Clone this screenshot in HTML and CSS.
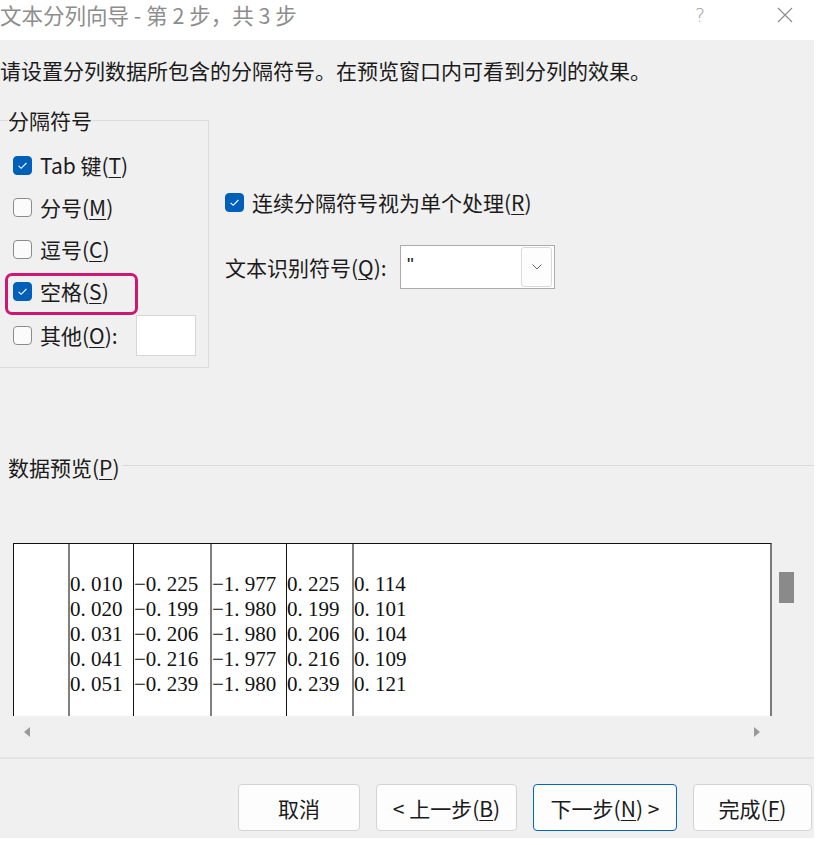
FILE: index.html
```html
<!DOCTYPE html>
<html lang="zh-CN">
<head>
<meta charset="utf-8">
<title>文本分列向导</title>
<link rel="stylesheet" href="styles.css">
</head>
<body>
<div class="window">
  <div class="titlebar">
    <span class="title">文本分列向导 - 第 2 步，共 3 步</span>
    <span class="help">?</span>
    <span class="close"><svg width="16" height="16" viewBox="0 0 16 16"><path d="M1 1 L15 15 M15 1 L1 15" stroke="#8a8a8a" stroke-width="1.1" fill="none"/></svg></span>
  </div>
  <div class="main">
    <p class="intro">请设置分列数据所包含的分隔符号。在预览窗口内可看到分列的效果。</p>
    <div class="options">
      <fieldset class="delims">
        <legend>分隔符号</legend>
        <div class="row"><span class="cb on"><svg width="19" height="19" viewBox="0 0 19 19"><path d="M5.6 9.8 L8.2 12.3 L13.4 7" stroke="#fff" stroke-width="1.1" fill="none"/></svg></span><span>Tab 键(<u>T</u>)</span></div>
        <div class="row"><span class="cb"></span><span>分号(<u>M</u>)</span></div>
        <div class="row"><span class="cb"></span><span>逗号(<u>C</u>)</span></div>
        <div class="row marked"><span class="cb on"><svg width="19" height="19" viewBox="0 0 19 19"><path d="M5.6 9.8 L8.2 12.3 L13.4 7" stroke="#fff" stroke-width="1.1" fill="none"/></svg></span><span>空格(<u>S</u>)</span><span class="mark"></span></div>
        <div class="row other"><span class="cb"></span><span class="other-label">其他(<u>O</u>):</span><span class="other-input"></span></div>
      </fieldset>
      <div class="side">
        <div class="row"><span class="cb on"><svg width="19" height="19" viewBox="0 0 19 19"><path d="M5.6 9.8 L8.2 12.3 L13.4 7" stroke="#fff" stroke-width="1.1" fill="none"/></svg></span><span>连续分隔符号视为单个处理(<u>R</u>)</span></div>
        <div class="qualifier">
          <span class="q-label">文本识别符号(<u>Q</u>):</span>
          <div class="combo">
            <span class="combo-val">"</span>
            <span class="combo-btn"><svg width="12" height="8" viewBox="0 0 12 8"><path d="M1.5 1.5 L6 6 L10.5 1.5" stroke="#666" stroke-width="1" fill="none"/></svg></span>
          </div>
        </div>
      </div>
    </div>
    <div class="preview-head"><span>数据预览(<u>P</u>)</span><span class="rule"></span></div>
    <div class="preview">
      <div class="grid">
        <div class="col c0"></div>
        <div class="col c1 gray">0. 010<br>0. 020<br>0. 031<br>0. 041<br>0. 051</div>
        <div class="col c2 black">&minus;0. 225<br>&minus;0. 199<br>&minus;0. 206<br>&minus;0. 216<br>&minus;0. 239</div>
        <div class="col c3 gray">&minus;1. 977<br>&minus;1. 980<br>&minus;1. 980<br>&minus;1. 977<br>&minus;1. 980</div>
        <div class="col c4 black">0. 225<br>0. 199<br>0. 206<br>0. 216<br>0. 239</div>
        <div class="col c5 gray">0. 114<br>0. 101<br>0. 104<br>0. 109<br>0. 121</div>
      </div>
      <div class="vscroll"><span class="thumb"></span></div>
    </div>
    <div class="hscroll">
      <svg width="8" height="12" viewBox="0 0 8 12"><path d="M7 1 L1 6 L7 11 Z" fill="#9a9a9a"/></svg>
      <svg width="8" height="12" viewBox="0 0 8 12"><path d="M1 1 L7 6 L1 11 Z" fill="#9a9a9a"/></svg>
    </div>
    <div class="sep"></div>
    <div class="buttons">
      <button class="btn w-cancel">取消</button>
      <button class="btn w-back">&lt; 上一步(<u>B</u>)</button>
      <button class="btn w-next default">下一步(<u>N</u>) &gt;</button>
      <button class="btn w-finish">完成(<u>F</u>)</button>
    </div>
  </div>
</div>
</body>
</html>
```

FILE: styles.css
```css
html, body {
  margin: 0;
  padding: 0;
  background: #ffffff;
}
body {
  width: 819px;
  height: 845px;
  overflow: hidden;
  font-family: "Noto Sans CJK SC", "Noto Sans", sans-serif;
  font-size: 21px;
  color: #1b1b1b;
}
u {
  text-decoration: underline;
  text-underline-offset: 3px;
  text-decoration-thickness: 1px;
}

/* title bar */
.titlebar {
  height: 40px;
  display: flex;
  align-items: flex-start;
  background: #fff;
}
.title {
  line-height: 30px;
  color: #8d8d8d;
  font-size: 21.5px;
  white-space: nowrap;
}
.help {
  margin-left: auto;
  margin-right: 72px;
  line-height: 30px;
  font-size: 19px;
  color: #9a9a9a;
  font-family: "DejaVu Sans", sans-serif;
  font-weight: 200;
}
.close {
  margin-right: 26px;
  margin-top: 7px;
  width: 16px;
  height: 16px;
  display: flex;
}

/* main panel */
.main {
  width: 814px;
  height: 798px;
  background: #f0f0f0;
  display: flex;
  flex-direction: column;
}
.intro {
  margin: 0;
  padding-top: 14px;
  line-height: 32px;
  white-space: nowrap;
}
.options {
  display: flex;
  margin-top: 20px;
}
.delims {
  margin: 0;
  padding: 10px 0 9px 0;
  width: 209px;
  box-sizing: border-box;
  border: 1px solid #dcdcdc;
  border-left: none;
  min-width: 0;
}
.delims legend {
  margin-left: 8px;
  padding: 0;
  line-height: 28px;
}
.row {
  position: relative;
  display: flex;
  align-items: center;
  gap: 8px;
  height: 42px;
  padding-left: 13px;
  white-space: nowrap;
}
.row.other {
  height: 46px;
}
.cb {
  width: 19px;
  height: 19px;
  box-sizing: border-box;
  border: 1px solid #8b8b8b;
  border-radius: 4px;
  background: #fbfbfb;
  flex: none;
  display: flex;
}
.cb.on {
  background: #005fb8;
  border-color: #005fb8;
}
.cb.on svg {
  margin: -1px;
}
.mark {
  position: absolute;
  left: 5px;
  top: 3px;
  width: 133px;
  height: 42px;
  box-sizing: border-box;
  border: 3px solid #cc1872;
  border-radius: 7px;
}
.other-label {
  width: 88px;
}
.other-input {
  width: 60px;
  height: 41px;
  box-sizing: border-box;
  background: #fff;
  border: 1px solid #d6d6d6;
}

.side {
  padding-left: 16px;
  padding-top: 75px;
}
.side .row {
  padding-left: 0;
}
.qualifier {
  display: flex;
  align-items: center;
  margin-top: 22px;
  white-space: nowrap;
}
.q-label {
  width: 175px;
}
.combo {
  width: 155px;
  height: 44px;
  box-sizing: border-box;
  border: 1px solid #ababab;
  background: #fff;
  display: flex;
  align-items: flex-start;
  padding: 1px 2px 1px 0;
}
.combo-val {
  flex: 1;
  padding-left: 6px;
  line-height: 36px;
  font-family: "Liberation Sans", sans-serif;
  font-size: 19px;
}
.combo-btn {
  width: 31px;
  height: 40px;
  box-sizing: border-box;
  border: 1px solid #d9d9d9;
  border-radius: 3px;
  background: #fdfdfd;
  display: flex;
  align-items: center;
  justify-content: center;
}

/* preview */
.preview-head {
  margin-top: 85px;
  display: flex;
  align-items: center;
  padding-left: 8px;
  line-height: 28px;
  white-space: nowrap;
}
.preview-head .rule {
  flex: 1;
  height: 1px;
  background: #dadada;
  margin-left: 2px;
  margin-top: -4px;
}
.preview {
  margin-top: 62px;
  display: flex;
  height: 173px;
}
.grid {
  margin-left: 13px;
  width: 759px;
  box-sizing: border-box;
  border-top: 1px solid #111;
  border-left: 1px solid #111;
  border-right: 2px solid #7a7a7a;
  background: #fff;
  display: flex;
  overflow: hidden;
}
.col {
  box-sizing: border-box;
  padding-top: 28px;
  line-height: 25px;
  font-family: "Liberation Serif", serif;
  font-size: 21px;
  color: #111;
  white-space: nowrap;
}
.col.gray {
  border-left: 2px solid #808080;
}
.col.black {
  border-left: 1px solid #111;
}
.c0 { width: 54px; }
.c1 { width: 65px; }
.c2 { width: 77px; }
.c3 { width: 76px; }
.c4 { width: 66px; }
.c5 { flex: 1; }
.vscroll {
  padding-left: 7px;
  padding-top: 29px;
}
.thumb {
  display: block;
  width: 15px;
  height: 31px;
  background: #8a8a8a;
}
.hscroll {
  height: 31px;
  display: flex;
  align-items: center;
  justify-content: space-between;
  padding-left: 23px;
  width: 761px;
  box-sizing: border-box;
}
.sep {
  margin-top: 10px;
  height: 2px;
  background: #e3e3e3;
}
.buttons {
  margin-top: 25px;
  display: flex;
  justify-content: flex-end;
  gap: 16px;
  padding-right: 2px;
}
.btn {
  height: 47px;
  box-sizing: border-box;
  border: 1px solid #d3d3d3;
  border-radius: 4px;
  background: #fdfdfd;
  font-family: "Noto Sans CJK SC", sans-serif;
  font-size: 21px;
  color: #1b1b1b;
  padding: 0;
  white-space: nowrap;
}
.btn.default {
  border-color: #0067c0;
}
.w-cancel { width: 122px; }
.w-back { width: 141px; }
.w-next { width: 144px; }
.w-finish { width: 119px; }
```
